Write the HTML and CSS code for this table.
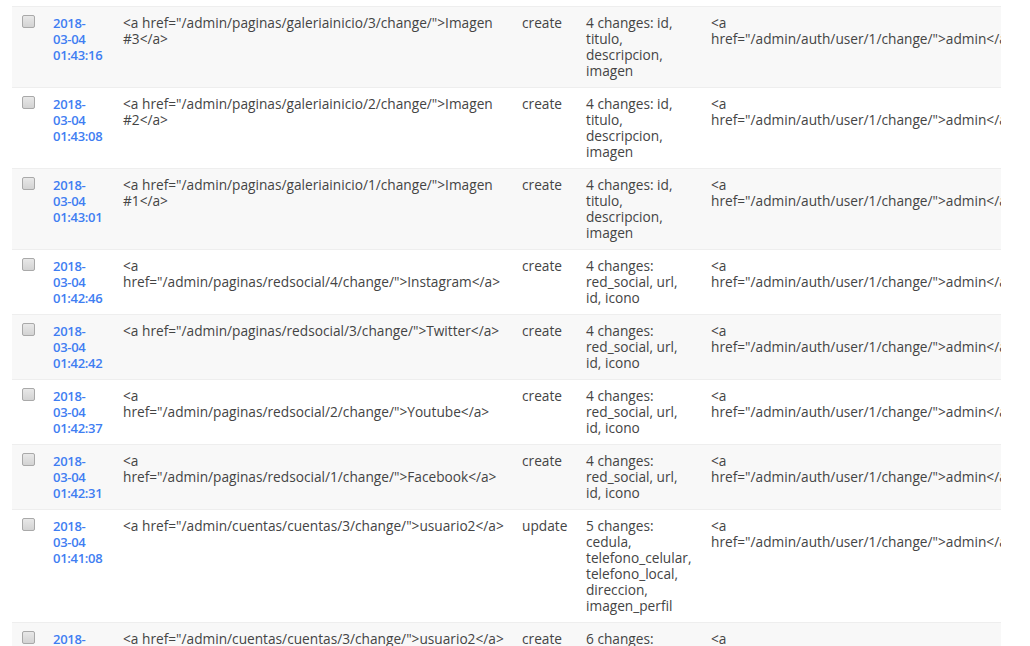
FILE: index.html
```html
<!DOCTYPE html>
<html lang="es">
<head>
<meta charset="utf-8">
<title>Log entries</title>
<link rel="stylesheet" href="styles.css">
</head>
<body>
<div class="results">
<table class="result-list">
<colgroup>
<col class="c-cb"><col class="c-date"><col class="c-obj"><col class="c-act"><col class="c-chg"><col class="c-usr"><col class="c-ct">
</colgroup>
<tbody>
<tr class="row1">
<td class="cb"><input type="checkbox"></td>
<th class="date"><a href="#">2018-<span class="nw">03-04</span> 01:43:16</a></th>
<td class="obj">&lt;a href="/admin/paginas/galeriainicio/3/change/"&gt;Imagen #3&lt;/a&gt;</td>
<td class="act">create</td>
<td class="chg">4 changes: id, titulo, descripcion, imagen</td>
<td class="usr">&lt;a href="/admin/auth/user/1/change/"&gt;admin&lt;/a&gt;</td>
<td class="ct">galeria inicio</td>
</tr>
<tr class="row2">
<td class="cb"><input type="checkbox"></td>
<th class="date"><a href="#">2018-<span class="nw">03-04</span> 01:43:08</a></th>
<td class="obj">&lt;a href="/admin/paginas/galeriainicio/2/change/"&gt;Imagen #2&lt;/a&gt;</td>
<td class="act">create</td>
<td class="chg">4 changes: id, titulo, descripcion, imagen</td>
<td class="usr">&lt;a href="/admin/auth/user/1/change/"&gt;admin&lt;/a&gt;</td>
<td class="ct">galeria inicio</td>
</tr>
<tr class="row1">
<td class="cb"><input type="checkbox"></td>
<th class="date"><a href="#">2018-<span class="nw">03-04</span> 01:43:01</a></th>
<td class="obj">&lt;a href="/admin/paginas/galeriainicio/1/change/"&gt;Imagen #1&lt;/a&gt;</td>
<td class="act">create</td>
<td class="chg">4 changes: id, titulo, descripcion, imagen</td>
<td class="usr">&lt;a href="/admin/auth/user/1/change/"&gt;admin&lt;/a&gt;</td>
<td class="ct">galeria inicio</td>
</tr>
<tr class="row2">
<td class="cb"><input type="checkbox"></td>
<th class="date"><a href="#">2018-<span class="nw">03-04</span> 01:42:46</a></th>
<td class="obj">&lt;a href="/admin/paginas/redsocial/4/change/"&gt;Instagram&lt;/a&gt;</td>
<td class="act">create</td>
<td class="chg">4 changes: red_social, url, id, icono</td>
<td class="usr">&lt;a href="/admin/auth/user/1/change/"&gt;admin&lt;/a&gt;</td>
<td class="ct">red social</td>
</tr>
<tr class="row1">
<td class="cb"><input type="checkbox"></td>
<th class="date"><a href="#">2018-<span class="nw">03-04</span> 01:42:42</a></th>
<td class="obj">&lt;a href="/admin/paginas/redsocial/3/change/"&gt;Twitter&lt;/a&gt;</td>
<td class="act">create</td>
<td class="chg">4 changes: red_social, url, id, icono</td>
<td class="usr">&lt;a href="/admin/auth/user/1/change/"&gt;admin&lt;/a&gt;</td>
<td class="ct">red social</td>
</tr>
<tr class="row2">
<td class="cb"><input type="checkbox"></td>
<th class="date"><a href="#">2018-<span class="nw">03-04</span> 01:42:37</a></th>
<td class="obj">&lt;a href="/admin/paginas/redsocial/2/change/"&gt;Youtube&lt;/a&gt;</td>
<td class="act">create</td>
<td class="chg">4 changes: red_social, url, id, icono</td>
<td class="usr">&lt;a href="/admin/auth/user/1/change/"&gt;admin&lt;/a&gt;</td>
<td class="ct">red social</td>
</tr>
<tr class="row1">
<td class="cb"><input type="checkbox"></td>
<th class="date"><a href="#">2018-<span class="nw">03-04</span> 01:42:31</a></th>
<td class="obj">&lt;a href="/admin/paginas/redsocial/1/change/"&gt;Facebook&lt;/a&gt;</td>
<td class="act">create</td>
<td class="chg">4 changes: red_social, url, id, icono</td>
<td class="usr">&lt;a href="/admin/auth/user/1/change/"&gt;admin&lt;/a&gt;</td>
<td class="ct">red social</td>
</tr>
<tr class="row2">
<td class="cb"><input type="checkbox"></td>
<th class="date"><a href="#">2018-<span class="nw">03-04</span> 01:41:08</a></th>
<td class="obj">&lt;a href="/admin/cuentas/cuentas/3/change/"&gt;usuario2&lt;/a&gt;</td>
<td class="act">update</td>
<td class="chg">5 changes: cedula, telefono_celular, telefono_local, direccion, imagen_perfil</td>
<td class="usr">&lt;a href="/admin/auth/user/1/change/"&gt;admin&lt;/a&gt;</td>
<td class="ct">cuentas</td>
</tr>
<tr class="row1">
<td class="cb"><input type="checkbox"></td>
<th class="date"><a href="#">2018-<span class="nw">03-04</span> 01:40:52</a></th>
<td class="obj">&lt;a href="/admin/cuentas/cuentas/3/change/"&gt;usuario2&lt;/a&gt;</td>
<td class="act">create</td>
<td class="chg">6 changes: user, cedula, telefono_celular, telefono_local, direccion, imagen_perfil</td>
<td class="usr">&lt;a href="/admin/auth/user/1/change/"&gt;admin&lt;/a&gt;</td>
<td class="ct">cuentas</td>
</tr>
</tbody>
</table>
</div>
</body>
</html>
```

FILE: styles.css
```css
html, body {
  margin: 0;
  padding: 0;
  background: #fff;
}
body {
  font-family: "Open Sans", "Liberation Sans", sans-serif;
  font-size: 13.7px;
  line-height: 16px;
  color: #444;
}
.results {
  margin: 6px 0 0 12px;
  width: 989px;
  height: 640px;
  overflow: hidden;
}
.result-list {
  border-collapse: collapse;
  border-top: 1px solid #eee;
  table-layout: fixed;
  width: 1149px;
}
.c-cb { width: 31px; }
.c-date { width: 70px; }
.c-obj { width: 399px; }
.c-act { width: 64px; }
.c-chg { width: 125px; }
.c-usr { width: 320px; }
.c-ct { width: 140px; }
.result-list td,
.result-list th {
  padding: 8px 10px;
  vertical-align: top;
  text-align: left;
  border-bottom: 1px solid #eee;
  font-weight: normal;
  overflow: visible;
}
.result-list td.obj {
  padding-right: 6px;
}
.result-list td.chg {
  padding-right: 15px;
}
.row1 { background: #f8f8f8; }
.row2 { background: #fff; }
.cb input {
  -webkit-appearance: none;
  appearance: none;
  display: block;
  box-sizing: border-box;
  margin: 0;
  width: 13px;
  height: 13px;
  border: 1px solid #a9a9a9;
  border-radius: 2px;
  background: linear-gradient(#e8e8e8, #d3d3d3);
}
.result-list th.date {
  font-size: 13px;
  font-weight: 600;
  letter-spacing: -0.3px;
}
.date a {
  color: #3f7ef2;
  text-decoration: none;
}
.nw {
  white-space: nowrap;
}
</style>
```
